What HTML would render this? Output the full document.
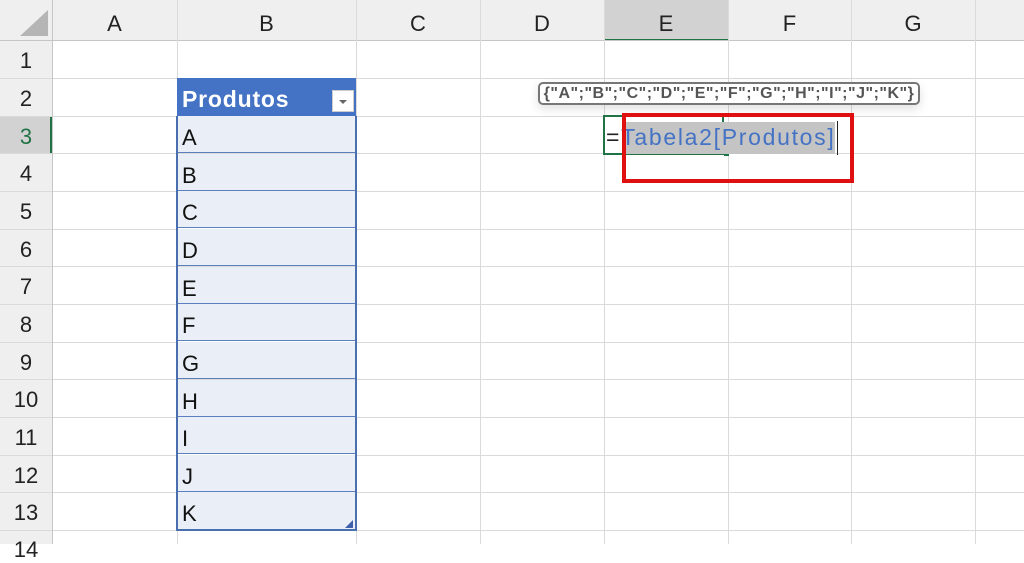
<!DOCTYPE html><html><head><style>
body{margin:0;width:1024px;height:544px;overflow:hidden;background:#fff;font-family:"Liberation Sans",sans-serif;position:relative}
.a{position:absolute}
.hd{background:#efefef}
.vl{position:absolute;top:0;width:1px;height:544px;background:#dadada}
.hl{position:absolute;left:0;height:1px;width:1024px;background:#dadada}
.rn{position:absolute;left:0;width:52px;text-align:center;font-size:22px;color:#222}
.cn{position:absolute;top:11px;font-size:22px;color:#222;text-align:center}
.it{position:absolute;left:178px;width:177px;height:37px;background:#e9eef7;border-bottom:1px solid #5b7fbf;font-size:22px;color:#111;box-sizing:border-box;padding-left:4px;line-height:44px}
</style></head><body>
<div class="a hd" style="left:0;top:0;width:1024px;height:41px"></div>
<div class="a hd" style="left:0;top:0;width:52px;height:544px"></div>
<div class="a" style="left:604px;top:0;width:124px;height:41px;background:#d2d2d2;border-bottom:2px solid #217346;box-sizing:border-box"></div>
<div class="a" style="left:0;top:116px;width:52px;height:38px;background:#d2d2d2;border-right:2px solid #217346;box-sizing:border-box"></div>
<svg class="a" style="left:18px;top:8px" width="32" height="30"><polygon points="30,2 30,28 2,28" fill="#b5b5b5"/></svg>
<div class="hl" style="top:40px;background:#c6c6c6"></div>
<div class="hl" style="top:78px"></div><div class="hl" style="top:116px"></div><div class="hl" style="top:153px"></div><div class="hl" style="top:191px"></div><div class="hl" style="top:229px"></div><div class="hl" style="top:266px"></div><div class="hl" style="top:304px"></div><div class="hl" style="top:342px"></div><div class="hl" style="top:379px"></div><div class="hl" style="top:417px"></div><div class="hl" style="top:455px"></div><div class="hl" style="top:492px"></div><div class="hl" style="top:530px"></div>
<div class="vl" style="left:52px;background:#c6c6c6"></div><div class="vl" style="left:177px"></div><div class="vl" style="left:356px"></div><div class="vl" style="left:480px"></div><div class="vl" style="left:604px"></div><div class="vl" style="left:728px"></div><div class="vl" style="left:851px"></div><div class="vl" style="left:975px"></div>
<div class="cn" style="left:52px;width:125px">A</div><div class="cn" style="left:177px;width:179px">B</div><div class="cn" style="left:356px;width:124px">C</div><div class="cn" style="left:480px;width:124px">D</div><div class="cn" style="left:604px;width:124px">E</div><div class="cn" style="left:728px;width:123px">F</div><div class="cn" style="left:851px;width:124px">G</div>
<div class="rn" style="top:48px">1</div><div class="rn" style="top:86px">2</div><div class="rn" style="top:124px;color:#217346">3</div><div class="rn" style="top:161px">4</div><div class="rn" style="top:199px">5</div><div class="rn" style="top:237px">6</div><div class="rn" style="top:274px">7</div><div class="rn" style="top:312px">8</div><div class="rn" style="top:350px">9</div><div class="rn" style="top:387px">10</div><div class="rn" style="top:425px">11</div><div class="rn" style="top:463px">12</div><div class="rn" style="top:500px">13</div><div class="rn" style="top:537px">14</div>
<div class="a" style="left:177px;top:78px;width:179px;height:38px;background:#4472c4;color:#fff;font-weight:bold;font-size:23px;line-height:42px;padding-left:5px;box-sizing:border-box;letter-spacing:.8px">Produtos</div>
<div class="a" style="left:332px;top:90px;width:22px;height:22px;background:#fff;border:1px solid #ccc;box-sizing:border-box"><svg width="20" height="20"><polygon points="6,9 14,9 10,13" fill="#666"/></svg></div>
<div class="it" style="top:116px">A</div><div class="it" style="top:154px">B</div><div class="it" style="top:191px">C</div><div class="it" style="top:229px">D</div><div class="it" style="top:267px">E</div><div class="it" style="top:304px">F</div><div class="it" style="top:342px">G</div><div class="it" style="top:380px">H</div><div class="it" style="top:417px">I</div><div class="it" style="top:455px">J</div><div class="it" style="top:492px;border-bottom:none">K</div>
<div class="a" style="left:176px;top:116px;width:181px;height:415px;border:2px solid #4a6fae;border-top:none;box-sizing:border-box"></div>
<div class="a" style="left:345px;top:520px;width:0;height:0;border-left:8px solid transparent;border-bottom:8px solid #3f5fa8"></div>
<div class="a" style="left:538px;top:82px;width:382px;height:23px;border:2px solid #777;border-radius:5px;box-sizing:border-box;background:#fff;box-shadow:0 4px 10px rgba(0,0,0,.12);font-size:16px;font-weight:bold;color:#555;line-height:20px;text-align:center;white-space:nowrap;letter-spacing:.5px">{"A";"B";"C";"D";"E";"F";"G";"H";"I";"J";"K"}</div>
<div class="a" style="left:603px;top:115px;width:121px;height:40px;border:2px solid #217346;box-sizing:border-box;background:#fff"></div>
<div class="a" style="left:724px;top:151px;width:5px;height:5px;background:#217346"></div>
<div class="a" style="left:625px;top:122px;width:210px;height:32px;background:#c4c4c4"></div>
<div class="a" style="left:606px;top:124px;font-size:23px;color:#222;white-space:nowrap;letter-spacing:1.7px">=<span style="color:#4472c4">Tabela2[Produtos]</span></div>
<div class="a" style="left:837px;top:121px;width:1px;height:34px;background:#222"></div>
<div class="a" style="left:622px;top:113px;width:232px;height:70px;border:4px solid #e01010;box-sizing:border-box"></div>
</body></html>
